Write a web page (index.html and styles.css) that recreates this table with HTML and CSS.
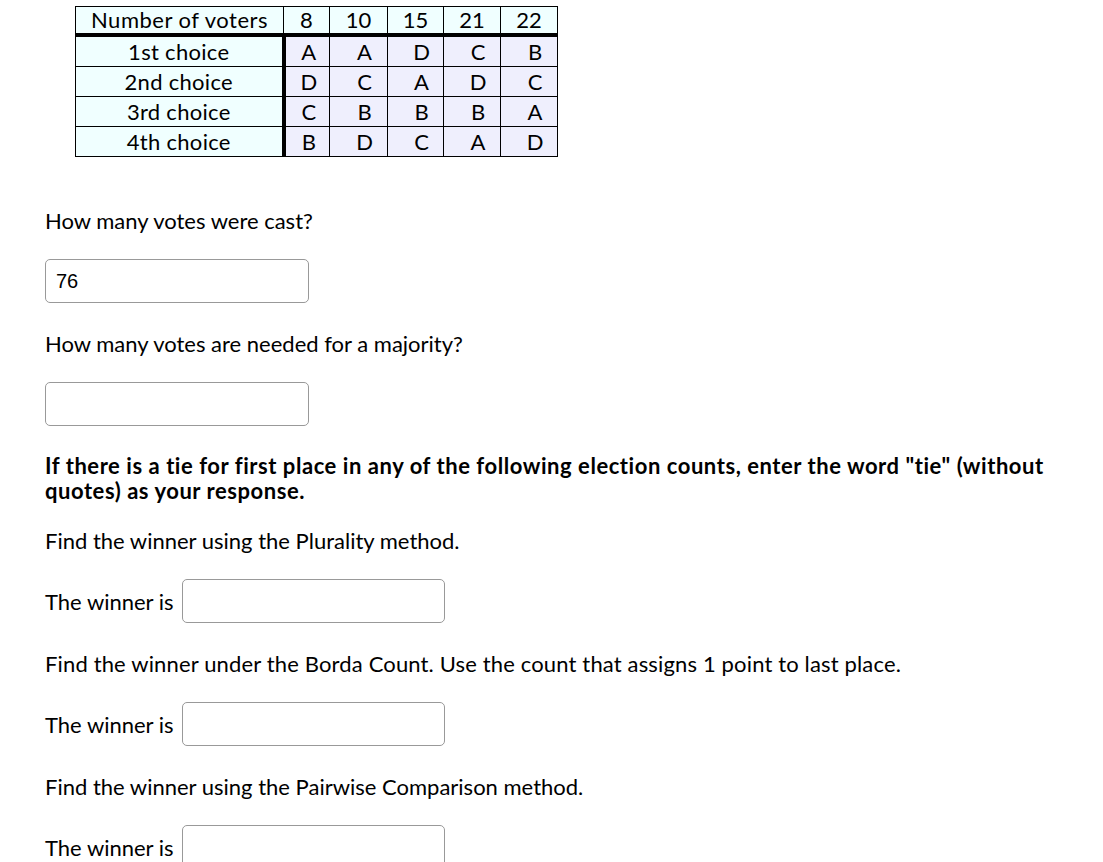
FILE: index.html
```html
<!DOCTYPE html>
<html lang="en">
<head>
<meta charset="utf-8">
<title>Election methods</title>
<link rel="stylesheet" href="styles.css">
</head>
<body>
<div class="page">
  <div class="table-wrap">
    <table class="ballots">
      <colgroup>
        <col class="c-label">
        <col class="c-8">
        <col class="c-10">
        <col class="c-15">
        <col class="c-21">
        <col class="c-22">
      </colgroup>
      <thead>
        <tr>
          <th class="label">Number of voters</th>
          <th>8</th>
          <th>10</th>
          <th>15</th>
          <th>21</th>
          <th>22</th>
        </tr>
      </thead>
      <tbody>
        <tr>
          <td class="label">1st choice</td>
          <td class="first">A</td><td>A</td><td>D</td><td>C</td><td>B</td>
        </tr>
        <tr>
          <td class="label">2nd choice</td>
          <td class="first">D</td><td>C</td><td>A</td><td>D</td><td>C</td>
        </tr>
        <tr>
          <td class="label">3rd choice</td>
          <td class="first">C</td><td>B</td><td>B</td><td>B</td><td>A</td>
        </tr>
        <tr>
          <td class="label">4th choice</td>
          <td class="first">B</td><td>D</td><td>C</td><td>A</td><td>D</td>
        </tr>
      </tbody>
    </table>
  </div>

  <p class="q q-first">How many votes were cast?</p>
  <div class="field"><input class="answer" type="text" value="76"></div>

  <p class="q">How many votes are needed for a majority?</p>
  <div class="field"><input class="answer" type="text" value=""></div>

  <p class="q note">If there is a tie for first place in any of the following election counts, enter the word "tie" (without quotes) as your response.</p>

  <p class="q q-method">Find the winner using the Plurality method.</p>
  <div class="winner-row"><span>The winner is</span><input class="answer" type="text"></div>

  <p class="q q-wide">Find the winner under the Borda Count. Use the count that assigns 1 point to last place.</p>
  <div class="winner-row"><span>The winner is</span><input class="answer" type="text"></div>

  <p class="q">Find the winner using the Pairwise Comparison method.</p>
  <div class="winner-row"><span>The winner is</span><input class="answer" type="text"></div>
</div>
</body>
</html>
```

FILE: styles.css
```css
html, body {
  margin: 0;
  padding: 0;
  background: #ffffff;
}

body {
  font-family: "Lato", "Open Sans", sans-serif;
  font-size: 22px;
  line-height: 25px;
  color: #000000;
}

.page {
  padding: 6px 46px 0 45px;
}

.table-wrap {
  padding-left: 30px;
}

.ballots {
  border-collapse: collapse;
  table-layout: fixed;
  width: 482px;
  font-size: 22px;
}

.c-label { width: 208px; }
.c-8 { width: 46px; }
.c-10 { width: 58px; }
.c-15 { width: 56px; }
.c-21 { width: 57px; }
.c-22 { width: 57px; }

.ballots th,
.ballots td {
  border: 1px solid #000000;
  text-align: center;
  padding: 2px 0 2px 12px;
  line-height: 25px;
  font-weight: normal;
}

.ballots th {
  background: #f0ffff;
  padding: 1px 0 1px 0;
  line-height: 24px;
  border-bottom: 4px solid #000000;
}

.ballots th.label {
  letter-spacing: 0.5px;
}

.ballots td {
  background: #efeffd;
}

.ballots td.label {
  background: #f0ffff;
  padding-left: 0;
  border-right: 4px solid #000000;
  letter-spacing: 0.3px;
}

.ballots td.first {
  padding-left: 3px;
}

.q {
  margin: 28px 0 0 0;
}

.q-first {
  margin-top: 51px;
}

.q-wide {
  letter-spacing: 0.15px;
}

.note {
  font-weight: bold;
  margin-top: 27px;
  letter-spacing: 0.55px;
}

.q-method {
  margin-top: 25px;
}

.field {
  margin-top: 26px;
}

.answer {
  box-sizing: border-box;
  width: 264px;
  height: 44px;
  border: 1px solid #999999;
  border-radius: 5px;
  padding: 0 10px;
  font-family: "Liberation Sans", Arial, sans-serif;
  font-size: 20px;
  color: #000000;
  background: #ffffff;
  outline: none;
  margin: 0;
}

.winner-row {
  display: flex;
  align-items: center;
  gap: 8px;
  margin-top: 26px;
}

.winner-row .answer {
  width: 263px;
}
```
